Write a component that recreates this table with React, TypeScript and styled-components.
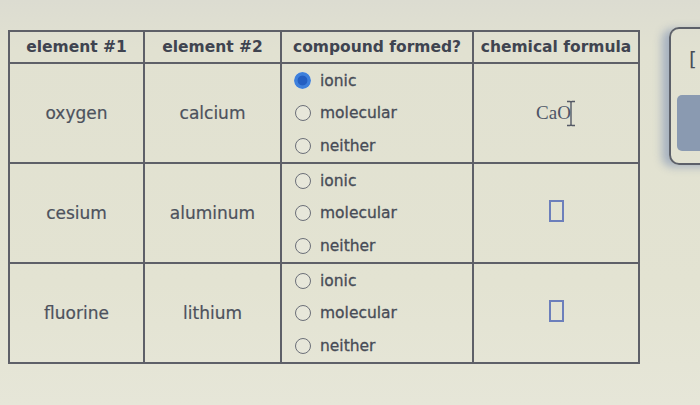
import styled, { createGlobalStyle, css } from 'styled-components';

const GlobalStyle = createGlobalStyle`
    html, body {
        margin: 0;
        padding: 0;
        background: linear-gradient(180deg, #dcdcd1 0%, #e1e1d1 12%, #e3e3d2 70%, #e6e6d8 100%);
        font-family: "DejaVu Sans", Verdana, sans-serif;
        overflow: hidden;
    }
`

const Page = styled.div`
    display: flex;
    align-items: flex-start;
    gap: 29px;
    width: 700px;
    height: 405px;
    padding: 30px 0 0 8px;
    box-sizing: border-box;
`

const Table = styled.table`
    border-collapse: collapse;
    table-layout: fixed;
    width: 630px;
    flex: none;
`

const HeadCell = styled.th`
    border: 2px solid #5e6068;
    height: 30px;
    padding: 0;
    font-size: 15.5px;
    font-weight: bold;
    color: #3f4450;
    text-align: center;
    white-space: nowrap;
`

const Cell = styled.td<{ $choices?: boolean }>`
    border: 2px solid #5e6068;
    padding: 0;
    height: 98px;
    font-size: 17px;
    color: #4d525d;
    -webkit-text-stroke: 0.2px #4d525d;
    text-align: center;
    vertical-align: middle;

    ${p => p.$choices && css`
        text-align: left;
        padding-left: 13px;
    `}
`

const Choice = styled.label`
    display: flex;
    align-items: center;
    gap: 9px;
    height: 32.5px;
    font-size: 15.5px;
    color: #474c57;
    -webkit-text-stroke: 0.3px #474c57;
`

const Radio = styled.span<{ $checked?: boolean }>`
    display: inline-block;
    width: 16px;
    height: 16px;
    border-radius: 50%;
    box-sizing: border-box;
    border: 1.8px solid #6b6f78;
    background: #e7e7da;

    ${p => p.$checked && css`
        width: 17px;
        height: 17px;
        margin-left: -1px;
        border: none;
        background: radial-gradient(circle, #245fc2 0 38%, #3e80dc 44% 66%, #8fb6ee 72% 100%);
    `}
`

const Formula = styled.span`
    display: inline-flex;
    align-items: center;
    font-family: "Liberation Serif", "Times New Roman", serif;
    font-size: 19px;
    color: #4e5566;
    -webkit-text-stroke: 0;
`

const AnswerBox = styled.span`
    display: inline-block;
    width: 11px;
    height: 18px;
    border: 2px solid #6c7fbb;
`

const Side = styled.div`
    flex: none;
    margin-top: -3px;
    width: 63px;
    height: 138px;
    border: 2px solid #5c6069;
    border-right: none;
    border-radius: 10px 0 0 10px;
    box-shadow: -7px 2px 9px rgba(95, 120, 170, 0.45);
    padding: 20px 0 0 18px;
    box-sizing: border-box;
    display: flex;
    flex-direction: column;
    gap: 26px;
`

const Bracket = styled.span`
    font-size: 20px;
    line-height: 20px;
    color: #4a4e58;
`

const Button = styled.div`
    margin-left: -12px;
    height: 56px;
    border-radius: 5px 0 0 5px;
    background: #8a9ab1;
`

type Row = { a: string; b: string; picked?: string; formula?: string };

const rows: Row[] = [
    { a: 'oxygen', b: 'calcium', picked: 'ionic', formula: 'CaO' },
    { a: 'cesium', b: 'aluminum' },
    { a: 'fluorine', b: 'lithium' },
];

const options = ['ionic', 'molecular', 'neither'];

function Cursor() {
    return (
        <svg width="10" height="27" viewBox="0 0 10 27" style={{ marginLeft: -5 }}>
            <path d="M1 1.5 H4 Q5 1.5 5 3 V24 Q5 25.5 4 25.5 H1 M9 1.5 H6 Q5 1.5 5 3 M5 24 Q5 25.5 6 25.5 H9"
                  fill="none" stroke="#555a66" strokeWidth="1.4" />
        </svg>
    );
}

export default function App() {
    return (
        <>
            <GlobalStyle />
            <Page>
                <Table>
                    <colgroup>
                        <col style={{ width: 135 }} />
                        <col style={{ width: 137 }} />
                        <col style={{ width: 192 }} />
                        <col style={{ width: 166 }} />
                    </colgroup>
                    <thead>
                        <tr>
                            <HeadCell>element #1</HeadCell>
                            <HeadCell>element #2</HeadCell>
                            <HeadCell>compound formed?</HeadCell>
                            <HeadCell>chemical formula</HeadCell>
                        </tr>
                    </thead>
                    <tbody>
                        {rows.map(row =>
                            <tr key={row.a}>
                                <Cell>{row.a}</Cell>
                                <Cell>{row.b}</Cell>
                                <Cell $choices>
                                    {options.map(opt =>
                                        <Choice key={opt}>
                                            <Radio $checked={row.picked === opt} />
                                            {opt}
                                        </Choice>
                                    )}
                                </Cell>
                                <Cell>
                                    {row.formula
                                        ? <Formula>{row.formula}<Cursor /></Formula>
                                        : <AnswerBox />}
                                </Cell>
                            </tr>
                        )}
                    </tbody>
                </Table>
                <Side>
                    <Bracket>[</Bracket>
                    <Button />
                </Side>
            </Page>
        </>
    );
}
